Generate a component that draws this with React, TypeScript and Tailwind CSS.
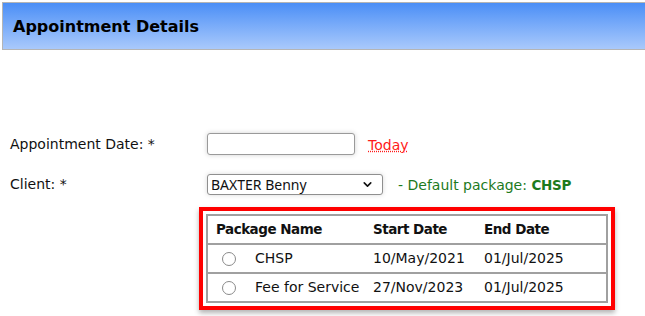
import { ChevronDown } from 'lucide-react'

const packages = [
  { name: 'CHSP', start: '10/May/2021', end: '01/Jul/2025' },
  { name: 'Fee for Service', start: '27/Nov/2023', end: '01/Jul/2025' },
]

export default function App() {
  return (
    <div className="h-[316px] w-[645px] overflow-hidden bg-white pl-[2px] pt-[2px] font-['DejaVu_Sans',sans-serif] text-[14px] text-[#111]">
      {/* Title bar */}
      <div className="flex h-[48px] items-center border-y border-l border-[#b5b5b5] bg-gradient-to-b from-[#4a8ef6] to-[#a9c9fb] pl-[10px]">
        <h1 className="mt-[2px] text-[16px] font-bold text-black">Appointment Details</h1>
      </div>

      <div className="pt-[83px] pl-[8px]">
        {/* Appointment date */}
        <div className="flex h-[22px] items-center">
          <label className="w-[197px]">Appointment Date: *</label>
          <input
            type="text"
            className="h-[22px] w-[148px] rounded-[3px] border border-[#9a9a9a] bg-white shadow-[0_0_5px_rgba(0,0,0,0.18)] outline-none"
          />
          <a className="ml-[13px] mt-[3px] text-[#ff1a1a] underline decoration-dotted decoration-[#ff1a1a]">Today</a>
        </div>

        {/* Client */}
        <div className="mt-[19px] flex h-[21px] items-center">
          <label className="w-[197px]">Client: *</label>
          <div className="flex h-[21px] w-[176px] items-center justify-between rounded-[3px] border border-[#8f8f8f] bg-white pl-[3px] pr-[8px] font-['Noto_Sans',sans-serif] text-[14px] shadow-[0_0_5px_rgba(0,0,0,0.15)]">
            <span>BAXTER Benny</span>
            <ChevronDown className="h-[13px] w-[13px]" strokeWidth={3} />
          </div>
          <span className="ml-[15px] mt-[2px] text-[#1d7a1d]">
            - Default package: <b className="text-[13.5px] tracking-[-0.3px]">CHSP</b>
          </span>
        </div>

        {/* Packages */}
        <div className="mt-[12px] ml-[189px] w-[416px] border-[4px] border-[#ff0000] p-[3px] shadow-[0_3px_5px_rgba(0,0,0,0.3)]">
          <table className="w-full border-collapse border-2 border-[#a0a0a0]">
            <thead>
              <tr className="h-[29px] border-b-2 border-[#a0a0a0] text-left text-[13.5px] tracking-[-0.5px]">
                <th className="w-[166px] pl-[8px] font-bold">Package Name</th>
                <th className="w-[111px] font-bold">Start Date</th>
                <th className="font-bold">End Date</th>
              </tr>
            </thead>
            <tbody>
              {packages.map((p, i) => (
                <tr
                  key={p.name}
                  className={
                    i === 0
                      ? 'h-[29px] border-b border-dotted border-[#888]'
                      : 'h-[29px] border-t-2 border-[#a0a0a0]'
                  }
                >
                  <td className="pl-[14px]">
                    <div className="flex items-center">
                      <span className="h-[14px] w-[14px] rounded-full border border-[#8a8a8a] bg-white" />
                      <span className="ml-[19px]">{p.name}</span>
                    </div>
                  </td>
                  <td>{p.start}</td>
                  <td>{p.end}</td>
                </tr>
              ))}
            </tbody>
          </table>
        </div>
      </div>
    </div>
  )
}
